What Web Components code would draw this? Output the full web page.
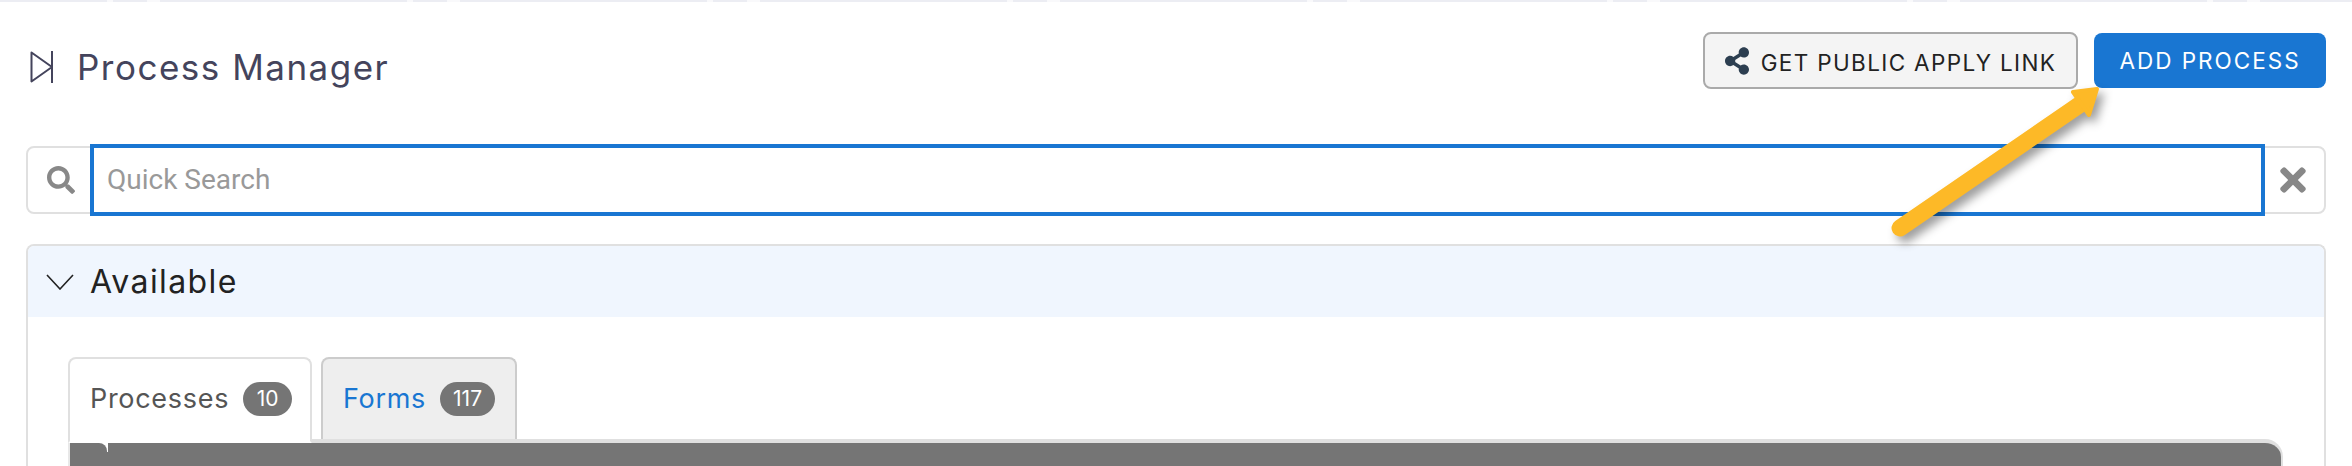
<!DOCTYPE html>
<html>
<head>
<meta charset="utf-8">
<title>Process Manager</title>
<style>
html, body { margin: 0; height: 466px; overflow: hidden; background: #fff; }
body { font-family: Inter, "Liberation Sans", sans-serif; }
</style>
</head>
<body>
<process-page>
    <top-strip></top-strip>
    <page-header>
        <action-button slot="actions" icon="share">GET PUBLIC APPLY LINK</action-button>
        <action-button slot="actions" primary>ADD PROCESS</action-button>
    </page-header>
    <quick-search></quick-search>
    <collapse-panel label="Available">
        <tab-strip>
            <tab-item count="10" active>Processes</tab-item>
            <tab-item count="117">Forms</tab-item>
        </tab-strip>
        <table-head></table-head>
    </collapse-panel>
    <callout-arrow></callout-arrow>
</process-page>

<script>
const FONT = 'Inter, "Liberation Sans", sans-serif';

class ProcessPage extends HTMLElement {
    constructor() {
        super();
        this.attachShadow({ mode: 'open' }).innerHTML = `
        <style>
        :host { display: flex; flex-direction: column; position: relative; height: 466px; overflow: hidden; font-family: ${FONT}; }
        </style>
        <slot></slot>
        `;
    }
}
customElements.define('process-page', ProcessPage);

class TopStrip extends HTMLElement {
    constructor() {
        super();
        this.attachShadow({ mode: 'open' }).innerHTML = `
        <style>
        :host {
            display: block;
            flex: none;
            height: 2px;
            background: repeating-linear-gradient(90deg,
                #ecedf3 0 107px, #f9f9fb 107px 113px,
                #ecedf3 113px 147px, #f9f9fb 147px 160px,
                #ecedf3 160px 300px);
        }
        </style>
        `;
    }
}
customElements.define('top-strip', TopStrip);

class PageHeader extends HTMLElement {
    constructor() {
        super();
        this.attachShadow({ mode: 'open' }).innerHTML = `
        <style>
        :host { display: flex; flex: none; align-items: flex-start; justify-content: space-between; padding: 30px 26px 0 30px; height: 114px; }
        .title { display: flex; align-items: center; gap: 24px; margin-top: 19px; height: 32px; color: #44445c; }
        svg { display: block; flex: none; }
        h1 { margin: 0; font-size: 35px; font-weight: 400; line-height: 32px; letter-spacing: 1.5px; white-space: nowrap; }
        .actions { display: flex; gap: 16px; align-items: center; }
        </style>
        <div class="title">
            <svg width="23" height="32" viewBox="0 0 23 32" fill="none" stroke="#44445c" stroke-width="2" stroke-linejoin="round">
                <path d="M1.5 1.5 L22 16 L1.5 30.5 Z"/>
                <path d="M22 0 V32"/>
            </svg>
            <h1>Process Manager</h1>
        </div>
        <div class="actions"><slot name="actions"></slot></div>
        `;
    }
}
customElements.define('page-header', PageHeader);

class ActionButton extends HTMLElement {
    constructor() {
        super();
        const primary = this.hasAttribute('primary');
        const icon = this.getAttribute('icon') === 'share' ? `
            <svg width="24" height="28" viewBox="0 0 448 512" fill="#2c3e50"><path d="M352 320c-22.608 0-43.387 7.819-59.79 20.895l-102.486-64.054a96.551 96.551 0 0 0 0-41.683l102.486-64.054C308.613 184.181 329.392 192 352 192c53.019 0 96-42.981 96-96S405.019 0 352 0s-96 42.981-96 96c0 7.158.79 14.13 2.276 20.841L155.79 180.895C139.387 167.819 118.608 160 96 160c-53.019 0-96 42.981-96 96s42.981 96 96 96c22.608 0 43.387-7.819 59.79-20.895l102.486 64.054A96.301 96.301 0 0 0 256 416c0 53.019 42.981 96 96 96s96-42.981 96-96-42.981-96-96-96z"/></svg>` : '';
        this.attachShadow({ mode: 'open' }).innerHTML = `
        <style>
        :host { display: block; }
        .btn {
            display: flex; align-items: center; justify-content: center; box-sizing: border-box;
            gap: 12px;
            height: ${primary ? 55 : 57}px;
            width: ${primary ? 232 : 375}px;
            border-radius: 8px;
            border: ${primary ? '0' : '2px solid #aaa'};
            background: ${primary ? '#1976d2' : '#f4f4f4'};
            color: ${primary ? '#fff' : '#222'};
            font-size: 22.5px;
            letter-spacing: ${primary ? 2 : 1.35}px;
            white-space: nowrap;
        }
        .label { padding-top: ${primary ? 0 : 3}px; }
        svg { display: block; flex: none; }
        </style>
        <div class="btn">${icon}<span class="label"><slot></slot></span></div>
        `;
    }
}
customElements.define('action-button', ActionButton);

class QuickSearch extends HTMLElement {
    constructor() {
        super();
        this.attachShadow({ mode: 'open' }).innerHTML = `
        <style>
        :host {
            display: flex; flex: none; box-sizing: border-box;
            height: 68px; margin: 0 26px 0 26px;
            border: 2px solid #e0e0e0; border-radius: 8px;
        }
        .addon { display: flex; align-items: center; justify-content: center; flex: none; box-sizing: border-box; }
        .left { width: 62px; padding-left: 4px; }
        .right { width: 59px; padding-right: 4px; }
        .field {
            flex: 1; box-sizing: border-box; margin: -4px 0; height: 72px;
            border: 4px solid #1976d2; padding: 0 13px 2px 13px;
            display: flex; align-items: center; background: #fff;
            font-family: Roboto, "Liberation Sans", sans-serif; font-size: 28px; color: #999;
        }
        svg { display: block; }
        </style>
        <div class="addon left">
            <svg width="28" height="28" viewBox="0 0 512 512" fill="#888"><path d="M505 442.7L405.3 343c-4.5-4.5-10.6-7-17-7H372c27.6-35.3 44-79.7 44-128C416 93.1 322.9 0 208 0S0 93.1 0 208s93.1 208 208 208c48.3 0 92.7-16.4 128-44v16.3c0 6.4 2.5 12.5 7 17l99.7 99.7c9.4 9.4 24.6 9.4 33.9 0l28.3-28.3c9.4-9.4 9.4-24.6.1-34zM208 336c-70.7 0-128-57.2-128-128 0-70.7 57.2-128 128-128 70.7 0 128 57.2 128 128 0 70.7-57.2 128-128 128z"/></svg>
        </div>
        <div class="field">Quick Search</div>
        <div class="addon right">
            <svg width="26" height="26" viewBox="0 77 352 358" fill="#888"><path d="M242.72 256l100.07-100.07c12.28-12.28 12.28-32.19 0-44.48l-22.24-22.24c-12.28-12.28-32.19-12.28-44.48 0L176 189.28 75.93 89.21c-12.28-12.28-32.19-12.28-44.48 0L9.21 111.45c-12.28 12.28-12.28 32.19 0 44.48L109.28 256 9.21 356.07c-12.28 12.28-12.28 32.19 0 44.48l22.24 22.24c12.28 12.28 32.2 12.28 44.48 0L176 322.72l100.07 100.07c12.28 12.28 32.2 12.28 44.48 0l22.24-22.24c12.28-12.28 12.28-32.19 0-44.48L242.72 256z"/></svg>
        </div>
        `;
    }
}
customElements.define('quick-search', QuickSearch);

class CollapsePanel extends HTMLElement {
    constructor() {
        super();
        this.attachShadow({ mode: 'open' }).innerHTML = `
        <style>
        :host {
            display: flex; flex-direction: column; flex: 1 0 auto; box-sizing: border-box;
            margin: 30px 26px 0 26px;
            border: 2px solid #e0e0e0; border-bottom: 0; border-radius: 8px 8px 0 0;
        }
        .head {
            display: flex; align-items: center; gap: 16px; flex: none;
            height: 71px; padding-left: 18px;
            background: #f0f6fe; border-radius: 6px 6px 0 0;
            color: #222; font-size: 32px; letter-spacing: 1.4px;
        }
        svg { display: block; flex: none; }
        .body { display: flex; flex-direction: column; flex: 1; padding: 40px 41px 0 40px; }
        </style>
        <div class="head">
            <svg width="28" height="16" viewBox="0 0 28 16" fill="none" stroke="#222" stroke-width="1.6"><path d="M1 1 L14 15 L27 1"/></svg>
            <span>${this.getAttribute('label')}</span>
        </div>
        <div class="body"><slot></slot></div>
        `;
    }
}
customElements.define('collapse-panel', CollapsePanel);

class TabStrip extends HTMLElement {
    constructor() {
        super();
        this.attachShadow({ mode: 'open' }).innerHTML = `
        <style>
        :host { display: flex; flex: none; gap: 9px; height: 82px; align-items: flex-start; position: relative; z-index: 1; }
        </style>
        <slot></slot>
        `;
    }
}
customElements.define('tab-strip', TabStrip);

class TabItem extends HTMLElement {
    constructor() {
        super();
        const active = this.hasAttribute('active');
        this.attachShadow({ mode: 'open' }).innerHTML = `
        <style>
        :host { display: block; }
        .tab {
            display: flex; align-items: flex-start; gap: 14px; box-sizing: border-box;
            width: ${active ? 244 : 196}px;
            height: ${active ? 86 : 82}px;
            padding: 23px 0 0 20px;
            border: 2px solid ${active ? '#e0e0e0' : '#ccc'};
            border-bottom: ${active ? '2px solid #fff' : '0'};
            border-radius: 8px 8px 0 0;
            background: ${active ? '#fff' : '#eee'};
            color: ${active ? '#555' : '#1976d2'};
            font-size: 27px; line-height: 34px; letter-spacing: 0.7px;
            white-space: nowrap;
        }
        .count {
            display: flex; align-items: center; justify-content: center;
            height: 34px; min-width: 49px; padding: 0 13px; box-sizing: border-box;
            border-radius: 17px; background: #757575; color: #fff;
            font-size: 21px; line-height: 34px; letter-spacing: 0;
        }
        </style>
        <div class="tab"><slot></slot><span class="count">${this.getAttribute('count')}</span></div>
        `;
    }
}
customElements.define('tab-item', TabItem);

class TableHead extends HTMLElement {
    constructor() {
        super();
        this.attachShadow({ mode: 'open' }).innerHTML = `
        <style>
        :host {
            display: block; flex: 1; box-sizing: border-box;
            border: 2px solid #e0e0e0; border-width: 4px 2px 0 2px;
            border-left-color: #e8e8e8;
            border-radius: 0 18px 0 0;
            background: #757575;
        }
        .corner { width: 38px; height: 9px; background: #fff; }
        .corner i { display: block; height: 9px; width: 37px; background: #757575; border-top-right-radius: 8px; }
        </style>
        <div class="corner"><i></i></div>
        `;
    }
}
customElements.define('table-head', TableHead);

// annotation drawn over the page, points at the add button
class CalloutArrow extends HTMLElement {
    constructor() {
        super();
        this.attachShadow({ mode: 'open' }).innerHTML = `
        <style>
        :host { display: block; position: absolute; left: 0; top: 0; width: 2352px; height: 466px; pointer-events: none; }
        svg { display: block; filter: drop-shadow(5px 6px 5px rgba(0,0,0,.38)); }
        </style>
        <svg width="2352" height="466" viewBox="0 0 2352 466">
            <path d="M1900 228 L2085 101" fill="none" stroke="#fdb927" stroke-width="17" stroke-linecap="round"/>
            <path d="M2073 92 L2097 89 L2089 115 Z" fill="#fdb927" stroke="#fdb927" stroke-width="4" stroke-linejoin="round"/>
        </svg>
        `;
    }
}
customElements.define('callout-arrow', CalloutArrow);
</script>
</body>
</html>
